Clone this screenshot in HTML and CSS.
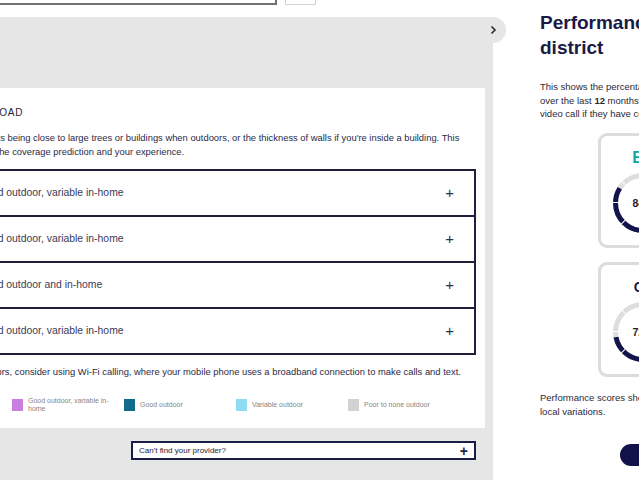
FILE: index.html
```html
<!DOCTYPE html>
<html lang="en">
<head>
    <meta charset="UTF-8"/>
    <title>Map your mobile - coverage results</title>
    <meta name="viewport" content="width=device-width, initial-scale=1"/>
    <link rel="stylesheet" href="styles.css">
</head>
<body>
    <div class="layout">
        <div class="finder">
            <form class="search">
                <input class="search-input" type="text" aria-label="Postcode"/>
                <button class="search-button" type="button" aria-label="Search"></button>
            </form>
            <section class="panel">
                <button class="panel-toggle" type="button" aria-label="Collapse">
                    <svg viewBox="0 0 10 10" width="10" height="10"><polyline points="3.5,1.5 7,5 3.5,8.5"/></svg>
                </button>
                <div class="results">
                    <h2 class="results-title">ON ROAD</h2>
                    <p class="results-text">Such as being close to large trees or buildings when outdoors, or the thickness of walls if you're inside a building. This alters the coverage prediction and your experience.</p>
                    <ul class="accordion">
                        <li class="accordion-item"><span>Good outdoor, variable in-home</span><span class="accordion-icon">+</span></li>
                        <li class="accordion-item"><span>Good outdoor, variable in-home</span><span class="accordion-icon">+</span></li>
                        <li class="accordion-item"><span>Good outdoor and in-home</span><span class="accordion-icon">+</span></li>
                        <li class="accordion-item"><span>Good outdoor, variable in-home</span><span class="accordion-icon">+</span></li>
                    </ul>
                    <p class="results-text">If indoors, consider using Wi-Fi calling, where your mobile phone uses a broadband connection to make calls and text.</p>
                    <ul class="legend">
                        <li class="legend-item"><span class="swatch swatch-best"></span>Good outdoor and in-home</li>
                        <li class="legend-item"><span class="swatch swatch-good-home"></span>Good outdoor, variable in-home</li>
                        <li class="legend-item"><span class="swatch swatch-good"></span>Good outdoor</li>
                        <li class="legend-item"><span class="swatch swatch-variable"></span>Variable outdoor</li>
                        <li class="legend-item"><span class="swatch swatch-poor"></span>Poor to none outdoor</li>
                    </ul>
                </div>
                <button class="provider-toggle" type="button"><span>Can't find your provider?</span><span class="provider-icon">+</span></button>
            </section>
        </div>
        <aside class="performance">
            <h2 class="performance-title">Performance in your postcode district</h2>
            <p class="performance-text">This shows the percentage of calls that connected successfully over the last <b>12</b> months, including whether people could make a video call if they have coverage.</p>
            <div class="score-card">
                <div class="score-name score-name-ee">EE</div>
                <div class="donut">
                    <svg viewBox="0 0 60 60" width="60" height="60">
                        <circle class="donut-track" cx="30" cy="30" r="27.5"/>
                        <circle class="donut-value" cx="30" cy="30" r="27.5" pathLength="100" stroke-dasharray="84 100" transform="rotate(-90 30 30)"/>
                        <circle class="donut-ticks" cx="30" cy="30" r="27.5" pathLength="100" transform="rotate(-90 30 30)"/>
                    </svg>
                    <span class="donut-label">84%</span>
                </div>
            </div>
            <div class="score-card">
                <div class="score-name">O2</div>
                <div class="donut">
                    <svg viewBox="0 0 60 60" width="60" height="60">
                        <circle class="donut-track" cx="30" cy="30" r="27.5"/>
                        <circle class="donut-value" cx="30" cy="30" r="27.5" pathLength="100" stroke-dasharray="72 100" transform="rotate(-90 30 30)"/>
                        <circle class="donut-ticks" cx="30" cy="30" r="27.5" pathLength="100" transform="rotate(-90 30 30)"/>
                    </svg>
                    <span class="donut-label">72%</span>
                </div>
            </div>
            <p class="performance-note">Performance scores show averages for the district and may not reflect local variations.</p>
            <button class="performance-button" type="button">See all providers</button>
        </aside>
    </div>
</body>
</html>
```

FILE: styles.css
```css
body {
    margin: 0;
    width: 639px;
    height: 480px;
    overflow: hidden;
    background-color: #fff;
    font-family: 'Liberation Sans', Arial, sans-serif;
    color: #23233f;
}

button, input {
    font: inherit;
}

.layout {
    display: flex;
    margin-left: -50px;
}

.finder {
    flex: none;
    width: 543px;
}

.search {
    display: grid;
    grid-template-columns: 1fr 31px;
    gap: 8px;
    height: 40px;
    margin: -35px 177px 0 0;
}

.search-input {
    box-sizing: border-box;
    border: 2px solid #707070;
    background-color: #fff;
}

.search-button {
    border: 1px solid #d4d4d4;
    background-color: #fff;
}

.panel {
    position: relative;
    margin-top: 12px;
    padding: 71px 8px 30px 0;
    background-color: #e6e6e6;
}

.panel-toggle {
    position: absolute;
    top: 0;
    right: -13px;
    width: 26px;
    height: 26px;
    padding: 0;
    border: 0;
    border-radius: 50%;
    background-color: #e6e6e6;
    display: grid;
    place-items: center;
}

.panel-toggle svg {
    fill: none;
    stroke: #2b2b2b;
    stroke-width: 1.6;
}

.results {
    background-color: #fff;
    padding: 19px 9px 15px 21px;
}

.results-title {
    margin: 0;
    font-size: 10px;
    line-height: 12px;
    font-weight: normal;
    letter-spacing: .8px;
    color: #22223c;
}

.results-text {
    margin: 12px 0 0;
    font-size: 9.4px;
    line-height: 14px;
    color: #2a2a48;
}

.accordion {
    list-style: none;
    margin: 10px 0 0;
    padding: 0;
}

.accordion-item {
    box-sizing: border-box;
    height: 48px;
    margin-top: -2px;
    padding: 0 20px 2px 5px;
    border: 2px solid #1f1f3b;
    display: flex;
    align-items: center;
    justify-content: space-between;
    font-size: 10.4px;
    color: #3b3b55;
}

.accordion-item:first-child {
    margin-top: 0;
}

.accordion-icon {
    font-size: 15px;
    font-weight: 300;
    color: #2f2f45;
}

.accordion + .results-text {
    margin-top: 10px;
}

.legend {
    list-style: none;
    display: flex;
    justify-content: flex-end;
    margin: 18px 0 0;
    padding: 0 16px 0 0;
}

.legend-item {
    flex: none;
    box-sizing: border-box;
    width: 112px;
    padding-right: 12px;
    display: flex;
    align-items: center;
    gap: 5px;
    font-size: 7px;
    line-height: 8px;
    color: #858585;
    height: 16px;
}

.swatch {
    flex: none;
    width: 11px;
    height: 12px;
}

.swatch-best {
    background-color: #6c2e91;
}

.swatch-good-home {
    background-color: #c97fe0;
}

.swatch-good {
    background-color: #106b8c;
}

.swatch-variable {
    background-color: #8edcf1;
}

.swatch-poor {
    background-color: #d2d2d2;
}

.provider-toggle {
    box-sizing: border-box;
    display: flex;
    align-items: center;
    justify-content: space-between;
    width: 345px;
    height: 19px;
    margin: 13px 9px 0 auto;
    padding: 0 6px;
    border: 2px solid #1c1c48;
    background-color: #fff;
    font-size: 8px;
    color: #24243e;
}

.provider-icon {
    font-size: 14px;
    font-weight: bold;
}

.performance {
    flex: none;
    width: 320px;
    padding: 10px 0 0 47px;
}

.performance-title {
    margin: 0;
    width: 300px;
    font-size: 19px;
    line-height: 25px;
    color: #1a1a46;
}

.performance-text {
    width: 280px;
    margin: 20px 0 0;
    font-size: 9.5px;
    line-height: 13.5px;
    color: #2a2a3a;
}

.score-card {
    box-sizing: border-box;
    width: 90px;
    height: 115px;
    margin: 12px 0 0 58px;
    padding-top: 10px;
    border: 3px solid #dcdcdc;
    border-radius: 9px;
    display: flex;
    flex-direction: column;
    align-items: center;
}

.score-card + .score-card {
    margin-top: 14px;
}

.score-name {
    height: 24px;
    line-height: 24px;
    font-size: 14px;
    font-weight: bold;
    color: #1a1a46;
}

.score-name-ee {
    font-size: 16px;
    color: #11a3a6;
}

.donut {
    display: grid;
    place-items: center;
    margin-top: 3px;
}

.donut > * {
    grid-area: 1 / 1;
}

.donut circle {
    fill: none;
    stroke-width: 5;
}

.donut-track {
    stroke: #dedede;
}

.donut-value {
    stroke: #14144c;
}

.donut-ticks {
    stroke: #fff;
    stroke-dasharray: .6 11.9;
}

.donut-label {
    font-size: 10.5px;
    font-weight: bold;
    color: #1d1d2e;
}

.performance-note {
    width: 305px;
    margin: 14px 0 0;
    font-size: 9.5px;
    line-height: 14px;
    color: #2a2a3a;
}

.performance-button {
    display: block;
    margin: 25px 0 0 80px;
    height: 22px;
    padding: 0 24px;
    border: 0;
    border-radius: 11px;
    background-color: #12124a;
    color: #fff;
    font-size: 10px;
}
```
